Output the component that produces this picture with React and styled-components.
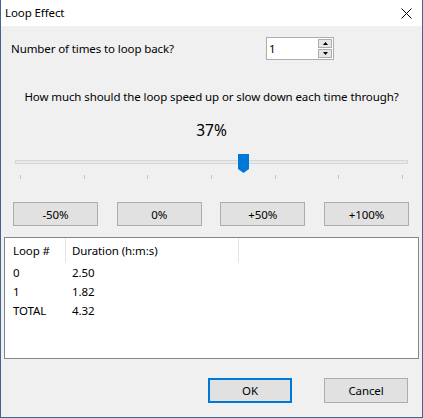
import React from "react";
import styled, { createGlobalStyle } from "styled-components";

const GlobalStyle = createGlobalStyle`
  html, body {
    margin: 0;
    padding: 0;
    background: #f0f0f0;
  }
  * {
    box-sizing: border-box;
  }
`;

const Window = styled.div`
  width: 423px;
  height: 418px;
  display: flex;
  flex-direction: column;
  border: 1px solid #43648f;
  border-top: 0;
  background: #f0f0f0;
  font-family: "Noto Sans", "Open Sans", sans-serif;
  font-size: 11.5px;
  letter-spacing: -0.1px;
  color: #000;
`;

const TitleBar = styled.div`
  height: 26px;
  flex: none;
  display: flex;
  align-items: center;
  justify-content: space-between;
  background: #fff;
  padding: 0 10px 0 4px;
`;

const Title = styled.span`
  line-height: 16px;
`;

const Body = styled.div`
  flex: 1;
  display: flex;
  flex-direction: column;
  padding-top: 11px;
`;

const SpinRow = styled.div`
  display: flex;
  align-items: center;
  justify-content: space-between;
  height: 23px;
  padding: 0 88px 0 10px;
`;

const SpinBox = styled.div`
  width: 68px;
  height: 23px;
  display: flex;
  align-items: center;
  border: 1px solid #adadad;
  background: #fff;
  padding: 0 1px 0 2px;
`;

const SpinValue = styled.span`
  flex: 1;
  line-height: 16px;
`;

const SpinButtons = styled.div`
  width: 14px;
  display: flex;
  flex-direction: column;
  gap: 1px;
`;

const SpinButton = styled.div`
  height: 9px;
  display: flex;
  align-items: center;
  justify-content: center;
  background: #e6e6e6;
  border: 1px solid #adadad;
`;

const Question = styled.div`
  margin-top: 29px;
  text-align: center;
  line-height: 16px;
`;

const Percent = styled.div`
  margin-top: 15px;
  text-align: center;
  font-size: 15.5px;
  letter-spacing: 0;
  line-height: 20px;
`;

const Slider = styled.div`
  margin: 14px 14px 0 14px;
  height: 25px;
  display: flex;
  flex-direction: column;
  position: relative;
`;

const Track = styled.div`
  margin-top: 6px;
  height: 4px;
  background: #e7eaea;
  border: 1px solid #d6d6d6;
`;

const Ticks = styled.div`
  margin-top: 11px;
  display: flex;
  justify-content: space-between;
  padding: 0 5px;
`;

const Tick = styled.div`
  width: 1px;
  height: 4px;
  background: #c4c4c4;
`;

const Thumb = styled.svg`
  position: absolute;
  top: 0;
  width: 11px;
  height: 19px;
`;

const Presets = styled.div`
  margin-top: 23px;
  display: flex;
  justify-content: space-between;
  padding: 0 13px 0 12px;
`;

const Button = styled.button`
  width: 85px;
  height: 24px;
  padding: 0;
  font: inherit;
  letter-spacing: inherit;
  color: #000;
  background: #e1e1e1;
  border: ${(p) => (p.$default ? "2px solid #0078d7" : "1px solid #adadad")};
`;

const List = styled.div`
  margin: 11px 3px 0 3px;
  height: 122px;
  background: #fff;
  border: 1px solid #828790;
`;

const ListRow = styled.div`
  display: grid;
  grid-template-columns: 61px 173px 1fr;
  height: ${(p) => (p.$header ? "25px" : "19px")};
  align-items: center;
`;

const HeaderCell = styled.div`
  height: 25px;
  display: flex;
  align-items: center;
  padding-left: ${(p) => p.$pad}px;
  border-right: 1px solid #e5e5e5;
`;

const Cell = styled.div`
  padding-left: ${(p) => p.$pad}px;
  line-height: 16px;
`;

const Footer = styled.div`
  margin-top: 19px;
  display: flex;
  justify-content: flex-end;
  gap: 32px;
  padding-right: 14px;
`;

const FooterButton = styled(Button)`
  width: 84px;
  height: 25px;
`;

const rows = [
  ["0", "2.50"],
  ["1", "1.82"],
  ["TOTAL", "4.32"],
];

const thumbPosition = 0.5825;

export default function App() {
  return (
    <>
      <GlobalStyle />
      <Window>
        <TitleBar>
          <Title>Loop Effect</Title>
          <svg width="11" height="11" viewBox="0 0 11 11">
            <path d="M0.5 0.5 L10.5 10.5 M10.5 0.5 L0.5 10.5" stroke="#000" strokeWidth="1" />
          </svg>
        </TitleBar>
        <Body>
          <SpinRow>
            <span>Number of times to loop back?</span>
            <SpinBox>
              <SpinValue>1</SpinValue>
              <SpinButtons>
                <SpinButton>
                  <svg width="5" height="3" viewBox="0 0 5 3">
                    <path d="M2.5 0 L5 3 L0 3 Z" fill="#000" />
                  </svg>
                </SpinButton>
                <SpinButton>
                  <svg width="5" height="3" viewBox="0 0 5 3">
                    <path d="M0 0 L5 0 L2.5 3 Z" fill="#000" />
                  </svg>
                </SpinButton>
              </SpinButtons>
            </SpinBox>
          </SpinRow>

          <Question>How much should the loop speed up or slow down each time through?</Question>
          <Percent>37%</Percent>

          <Slider>
            <Track />
            <Ticks>
              {Array.from({ length: 7 }).map((_, i) => (
                <Tick key={i} />
              ))}
            </Ticks>
            <Thumb
              viewBox="0 0 11 19"
              style={{ left: `calc(5px + ${thumbPosition} * (100% - 10px) - 5.5px)` }}
            >
              <path d="M0 0 H11 V15 L5.5 19 L0 15 Z" fill="#0078d7" />
            </Thumb>
          </Slider>

          <Presets>
            <Button>-50%</Button>
            <Button>0%</Button>
            <Button>+50%</Button>
            <Button>+100%</Button>
          </Presets>

          <List>
            <ListRow $header>
              <HeaderCell $pad={8}>Loop #</HeaderCell>
              <HeaderCell $pad={6}>Duration (h:m:s)</HeaderCell>
              <div />
            </ListRow>
            {rows.map(([loop, dur]) => (
              <ListRow key={loop}>
                <Cell $pad={8}>{loop}</Cell>
                <Cell $pad={6}>{dur}</Cell>
                <div />
              </ListRow>
            ))}
          </List>

          <Footer>
            <FooterButton $default>OK</FooterButton>
            <FooterButton>Cancel</FooterButton>
          </Footer>
        </Body>
      </Window>
    </>
  );
}
